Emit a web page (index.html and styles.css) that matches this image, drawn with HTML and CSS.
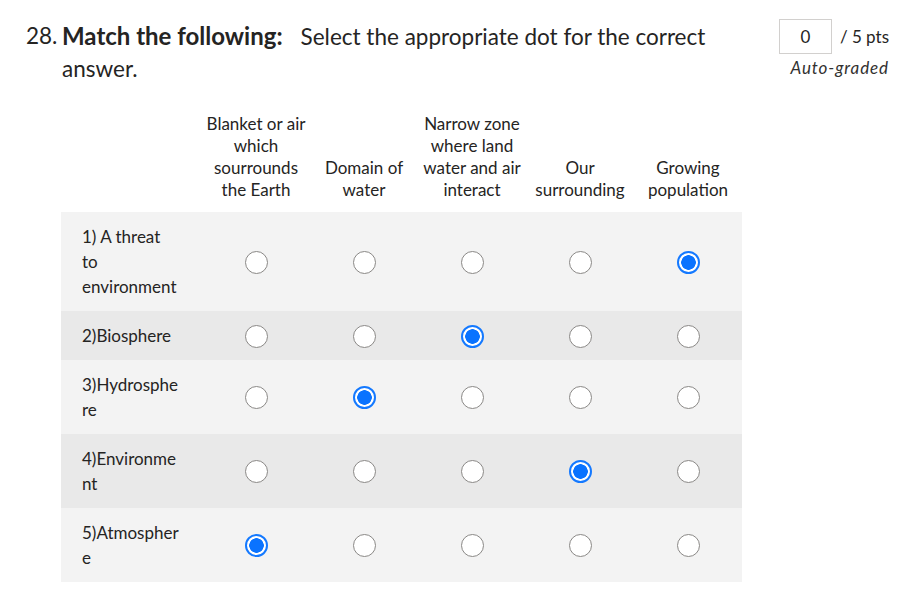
FILE: index.html
```html
<!DOCTYPE html>
<html>
<head>
<meta charset="utf-8">
<link rel="stylesheet" href="styles.css">
</head>
<body>
<div class="question">
  <div class="q-head">
    <div class="q-num">28.</div>
    <div class="q-title"><b class="q-bold">Match the following:</b><span class="q-text">Select the appropriate dot for the correct answer.</span></div>
    <div class="q-score">
      <div class="score-row"><span class="score-box">0</span><span class="score-total">/ 5 pts</span></div>
      <div class="auto">Auto-graded</div>
    </div>
  </div>
  <table class="matrix">
    <thead>
      <tr>
        <th class="label-col"></th>
        <th>Blanket or air which sourrounds the Earth</th>
        <th>Domain of water</th>
        <th>Narrow zone where land water and air interact</th>
        <th>Our surrounding</th>
        <th>Growing population</th>
      </tr>
    </thead>
    <tbody>
      <tr>
        <td class="label"><div class="label-text">1) A threat to environment</div></td>
        <td><span class="radio"></span></td><td><span class="radio"></span></td><td><span class="radio"></span></td><td><span class="radio"></span></td><td><span class="radio on"></span></td>
      </tr>
      <tr class="even">
        <td class="label"><div class="label-text">2)Biosphere</div></td>
        <td><span class="radio"></span></td><td><span class="radio"></span></td><td><span class="radio on"></span></td><td><span class="radio"></span></td><td><span class="radio"></span></td>
      </tr>
      <tr>
        <td class="label"><div class="label-text">3)Hydrosphere</div></td>
        <td><span class="radio"></span></td><td><span class="radio on"></span></td><td><span class="radio"></span></td><td><span class="radio"></span></td><td><span class="radio"></span></td>
      </tr>
      <tr class="even">
        <td class="label"><div class="label-text">4)Environment</div></td>
        <td><span class="radio"></span></td><td><span class="radio"></span></td><td><span class="radio"></span></td><td><span class="radio on"></span></td><td><span class="radio"></span></td>
      </tr>
      <tr>
        <td class="label"><div class="label-text">5)Atmosphere</div></td>
        <td><span class="radio on"></span></td><td><span class="radio"></span></td><td><span class="radio"></span></td><td><span class="radio"></span></td><td><span class="radio"></span></td>
      </tr>
    </tbody>
  </table>
</div>
</body>
</html>
```
FILE: styles.css
```css
html, body {
  margin: 0;
  padding: 0;
  background: #ffffff;
}
body {
  font-family: "Lato", "Open Sans", sans-serif;
  color: #252423;
}
.question {
  padding: 20px 14px 0 26px;
}
.q-head {
  display: flex;
  align-items: flex-start;
}
.q-num {
  width: 36px;
  flex: none;
  font-size: 22.5px;
  line-height: 32px;
}
.q-title {
  flex: 1;
  font-size: 22.5px;
  line-height: 32px;
  padding-right: 60px;
}
.q-bold {
  font-weight: 700;
  font-size: 24px;
  margin-right: 18px;
}
.q-score {
  flex: none;
  display: flex;
  flex-direction: column;
  align-items: flex-end;
  margin-top: -1px;
}
.score-row {
  display: flex;
  align-items: center;
  gap: 8px;
}
.score-box {
  width: 51px;
  height: 33px;
  border: 1px solid #d2d0ce;
  display: flex;
  align-items: center;
  justify-content: center;
  font-size: 17px;
}
.score-total {
  font-size: 17px;
}
.auto {
  font-style: italic;
  font-size: 17px;
  letter-spacing: 0.9px;
  margin-top: 3px;
  color: #323130;
}
.matrix {
  margin-left: 35px;
  margin-top: 28px;
  border-collapse: collapse;
  font-size: 17px;
}
.matrix th {
  font-weight: 400;
  width: 108px;
  padding: 0 2px 11px;
  box-sizing: border-box;
  vertical-align: bottom;
  text-align: center;
  line-height: 22px;
}
.matrix th.label-col {
  width: 141px;
}
.matrix td {
  background: #f3f3f3;
  text-align: center;
  vertical-align: middle;
  padding: 0;
}
.matrix tr.even td {
  background: #e9e9e9;
}
.matrix td.label {
  text-align: left;
  padding: 12px 0 12px 21px;
  line-height: 25px;
  width: 141px;
  box-sizing: border-box;
}
.label-text {
  width: 97.4px;
  overflow-wrap: anywhere;
}
.radio {
  display: inline-block;
  width: 23px;
  height: 23px;
  box-sizing: border-box;
  border: 1.5px solid #8a8886;
  border-radius: 50%;
  background: #fff;
  vertical-align: middle;
}
.radio.on {
  border: 2px solid #1479ff;
  background: radial-gradient(circle, #0a73ff 0 7px, #ffffff 7.5px);
}
```
